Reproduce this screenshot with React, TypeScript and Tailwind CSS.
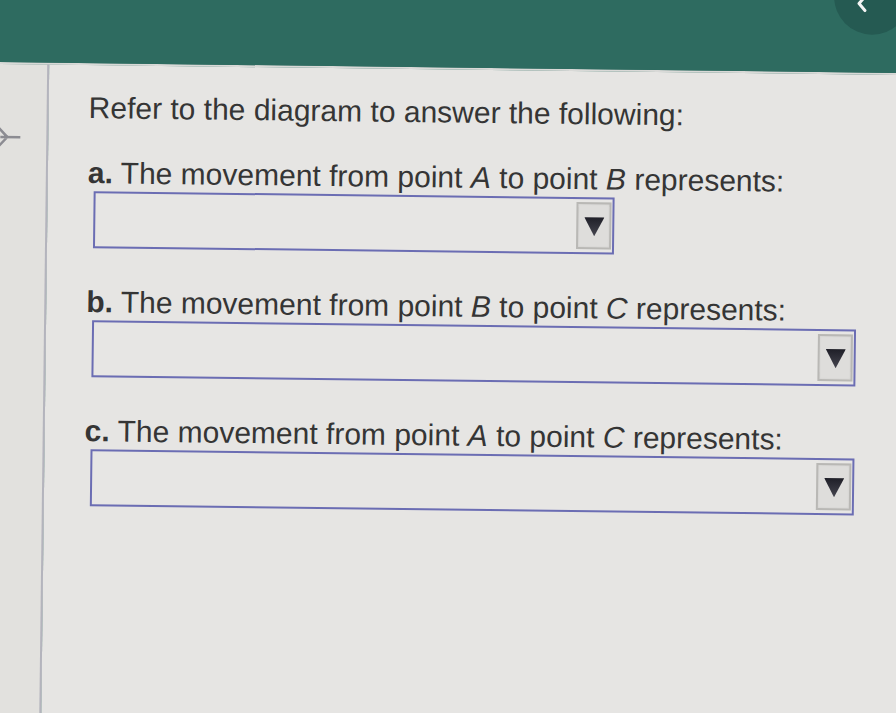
import React from "react";

type Part = { text: string; italic?: boolean };

const questions: { label: string; parts: Part[]; width: string }[] = [
  {
    label: "a.",
    parts: [
      { text: " The movement from point " },
      { text: "A", italic: true },
      { text: " to point " },
      { text: "B", italic: true },
      { text: " represents:" },
    ],
    width: "w-[521px]",
  },
  {
    label: "b.",
    parts: [
      { text: " The movement from point " },
      { text: "B", italic: true },
      { text: " to point " },
      { text: "C", italic: true },
      { text: " represents:" },
    ],
    width: "w-[764px]",
  },
  {
    label: "c.",
    parts: [
      { text: " The movement from point " },
      { text: "A", italic: true },
      { text: " to point " },
      { text: "C", italic: true },
      { text: " represents:" },
    ],
    width: "w-[764px]",
  },
];

function DropArrow() {
  return (
    <div className="flex h-[47px] w-[35px] items-center justify-center border-2 border-[#b9b8b5] bg-[#dedddb] shadow-[inset_0_0_2px_rgba(0,0,0,0.08)]">
      <svg width="20" height="20" viewBox="0 0 20 20">
        <defs>
          <linearGradient id="tri" x1="0" y1="0" x2="0" y2="1">
            <stop offset="0" stopColor="#1f1f28" />
            <stop offset="1" stopColor="#45454f" />
          </linearGradient>
        </defs>
        <polygon points="0,1 20,1 10,20" fill="url(#tri)" />
      </svg>
    </div>
  );
}

function Select({ width }: { width: string }) {
  return (
    <div
      className={`ml-[6px] flex h-[57px] ${width} items-center justify-end border-2 border-[#6b6db3] bg-[#e7e6e4] pr-[1px]`}
    >
      <DropArrow />
    </div>
  );
}

export default function App() {
  return (
    <div className="h-[713px] w-[896px] overflow-hidden bg-[#2e6b60] font-['Liberation_Sans',Arial,sans-serif]">
      <div className="-ml-[20px] -mt-[40px] flex h-[800px] w-[960px] origin-[20px_40px] rotate-[0.7deg] flex-col">
        {/* top bar */}
        <div className="relative h-[102px] shrink-0 bg-[#2e6b60]">
          <div className="absolute left-[854px] top-[-12px] h-[76px] w-[76px] rounded-full bg-[#255a52]">
            <svg width="12" height="18" viewBox="0 0 12 18" className="absolute left-[22px] top-[36px]">
              <path d="M9 2 L3 9 L9 16" stroke="#f4f4f4" strokeWidth="3" fill="none" strokeLinecap="round" strokeLinejoin="round" />
            </svg>
          </div>
        </div>
        <div className="flex flex-1 border-t-2 border-[#d9d9d7]">
          {/* side rail */}
          <div className="relative w-[70px] shrink-0 border-r-2 border-[#b4b4bd] bg-[#e2e1de]">
            <svg width="44" height="40" viewBox="0 0 44 40" className="absolute left-0 top-[53px]">
              <path d="M14 4 L29 20 L14 36 M22 20 L42 20" stroke="#8c8c92" strokeWidth="2.5" fill="none" />
            </svg>
          </div>
          {/* question panel */}
          <div className="flex-1 bg-[#e6e5e3] pl-[40px] pt-[26px] text-[#353535]">
            <p className="text-[30px] leading-[34px]">Refer to the diagram to answer the following:</p>
            <div className="mt-[31px] flex flex-col gap-[37px]">
              {questions.map((q) => (
                <div key={q.label} className="flex flex-col gap-[1px]">
                  <p className="text-[30px] leading-[34px]">
                    <span className="font-bold">{q.label}</span>
                    {q.parts.map((p, i) =>
                      p.italic ? (
                        <i key={i}>{p.text}</i>
                      ) : (
                        <span key={i}>{p.text}</span>
                      )
                    )}
                  </p>
                  <Select width={q.width} />
                </div>
              ))}
            </div>
          </div>
        </div>
      </div>
    </div>
  );
}
